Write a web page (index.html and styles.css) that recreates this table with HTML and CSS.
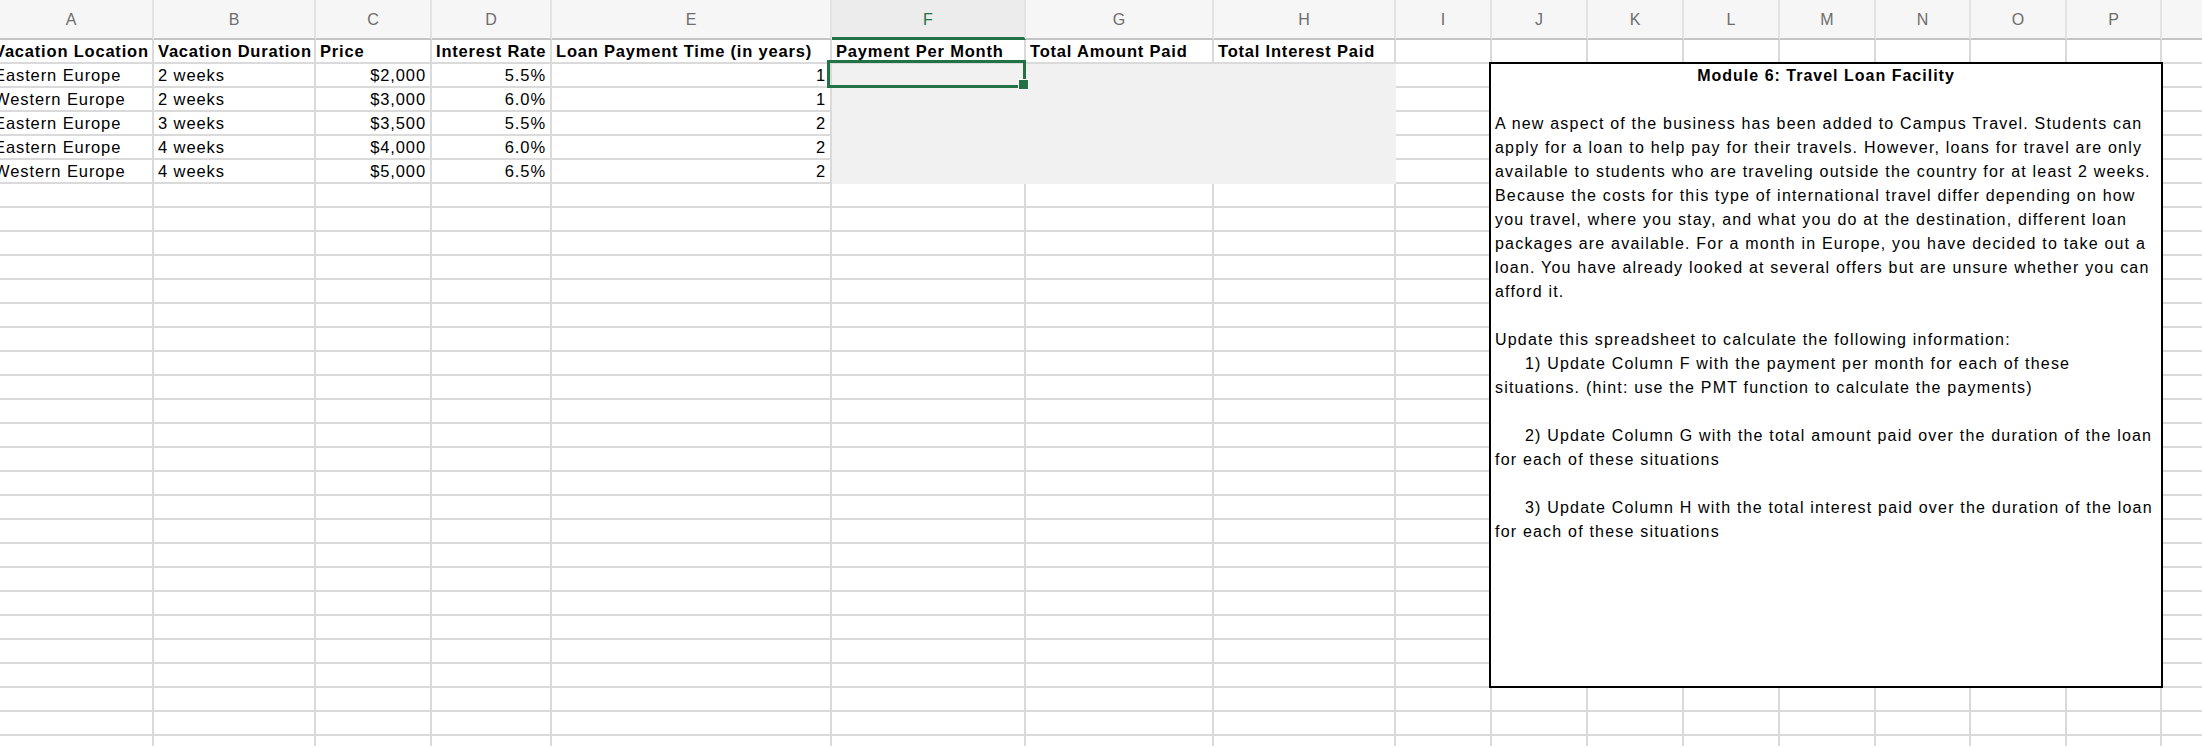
FILE: index.html
```html
<!DOCTYPE html>
<html lang="en">
<head>
<meta charset="utf-8">
<title>Module 6: Travel Loan Facility</title>
<link rel="stylesheet" href="styles.css">
</head>
<body>
<div class="viewport">
  <div class="sheet">
    <div class="ch">A</div><div class="ch">B</div><div class="ch">C</div><div class="ch">D</div><div class="ch">E</div><div class="ch ch-active">F</div><div class="ch">G</div><div class="ch">H</div><div class="ch">I</div><div class="ch">J</div><div class="ch">K</div><div class="ch">L</div><div class="ch">M</div><div class="ch">N</div><div class="ch">O</div><div class="ch">P</div><div class="ch ch-blank"></div>

    <div class="c b">Vacation Location</div><div class="c b">Vacation Duration</div><div class="c b">Price</div><div class="c b">Interest Rate</div><div class="c b">Loan Payment Time (in years)</div><div class="c b">Payment Per Month</div><div class="c b">Total Amount Paid</div><div class="c b">Total Interest Paid</div><div class="c"></div><div class="c"></div><div class="c"></div><div class="c"></div><div class="c"></div><div class="c"></div><div class="c"></div><div class="c"></div><div class="c"></div>

    <div class="c">Eastern Europe</div><div class="c">2 weeks</div><div class="c r">$2,000</div><div class="c r">5.5%</div><div class="c r">1</div><div class="c fill sel"></div><div class="c fill"></div><div class="c fill"></div><div class="c"></div><div class="c"></div><div class="c"></div><div class="c"></div><div class="c"></div><div class="c"></div><div class="c"></div><div class="c"></div><div class="c"></div>

    <div class="c">Western Europe</div><div class="c">2 weeks</div><div class="c r">$3,000</div><div class="c r">6.0%</div><div class="c r">1</div><div class="c fill"></div><div class="c fill"></div><div class="c fill"></div><div class="c"></div><div class="c"></div><div class="c"></div><div class="c"></div><div class="c"></div><div class="c"></div><div class="c"></div><div class="c"></div><div class="c"></div>

    <div class="c">Eastern Europe</div><div class="c">3 weeks</div><div class="c r">$3,500</div><div class="c r">5.5%</div><div class="c r">2</div><div class="c fill"></div><div class="c fill"></div><div class="c fill"></div><div class="c"></div><div class="c"></div><div class="c"></div><div class="c"></div><div class="c"></div><div class="c"></div><div class="c"></div><div class="c"></div><div class="c"></div>

    <div class="c">Eastern Europe</div><div class="c">4 weeks</div><div class="c r">$4,000</div><div class="c r">6.0%</div><div class="c r">2</div><div class="c fill"></div><div class="c fill"></div><div class="c fill"></div><div class="c"></div><div class="c"></div><div class="c"></div><div class="c"></div><div class="c"></div><div class="c"></div><div class="c"></div><div class="c"></div><div class="c"></div>

    <div class="c">Western Europe</div><div class="c">4 weeks</div><div class="c r">$5,000</div><div class="c r">6.5%</div><div class="c r">2</div><div class="c fill"></div><div class="c fill"></div><div class="c fill"></div><div class="c"></div><div class="c"></div><div class="c"></div><div class="c"></div><div class="c"></div><div class="c"></div><div class="c"></div><div class="c"></div><div class="c"></div>

    <div class="tail"></div><div class="tail"></div><div class="tail"></div><div class="tail"></div><div class="tail"></div><div class="tail"></div><div class="tail"></div><div class="tail"></div><div class="tail"></div><div class="tail"></div><div class="tail"></div><div class="tail"></div><div class="tail"></div><div class="tail"></div><div class="tail"></div><div class="tail"></div><div class="tail"></div>

    <div class="note">
      <div class="note-title">Module 6: Travel Loan Facility</div>
      <p class="note-p">A new aspect of the business has been added to Campus Travel. Students can<br>apply for a loan to help pay for their travels. However, loans for travel are only<br>available to students who are traveling outside the country for at least 2 weeks.<br>Because the costs for this type of international travel differ depending on how<br>you travel, where you stay, and what you do at the destination, different loan<br>packages are available. For a month in Europe, you have decided to take out a<br>loan. You have already looked at several offers but are unsure whether you can<br>afford it.</p>
      <p class="note-p tight">Update this spreadsheet to calculate the following information:</p>
      <p class="note-p ind">1) Update Column F with the payment per month for each of these<br>situations. (hint: use the PMT function to calculate the payments)</p>
      <p class="note-p ind">2) Update Column G with the total amount paid over the duration of the loan<br>for each of these situations</p>
      <p class="note-p ind">3) Update Column H with the total interest paid over the duration of the loan<br>for each of these situations</p>
    </div>
  </div>
</div>
</body>
</html>
```

FILE: styles.css
```css
html, body {
  margin: 0;
  padding: 0;
  background: #ffffff;
  overflow: hidden;
}

body {
  font-family: "Liberation Sans", Arial, Helvetica, sans-serif;
  color: #000000;
}

.viewport {
  width: 2202px;
  height: 746px;
  overflow: hidden;
}

.sheet {
  position: relative;
  margin-left: -10px;
  display: grid;
  grid-template-columns: 164px 162px 116px 120px 280px 194px 188px 182px 96px 96px 96px 96px 96px 95px 96px 95px 200px;
  grid-template-rows: 40px repeat(30, 24px);
}

.ch {
  box-sizing: border-box;
  height: 40px;
  padding-top: 2px;
  background: #f6f6f6;
  border-right: 2px solid #e3e3e3;
  border-bottom: 2px solid #c4c4c4;
  color: #6d6d6d;
  font-size: 16px;
  line-height: 36px;
  text-align: center;
}

.ch-active {
  background: #ececec;
  color: #217346;
  border-bottom: 3px solid #217346;
  line-height: 35px;
}

.c {
  box-sizing: border-box;
  height: 24px;
  padding: 1px 4px 0;
  border-right: 2px solid #dadada;
  border-bottom: 2px solid #dadada;
  font-size: 16.5px;
  line-height: 21px;
  letter-spacing: 0.9px;
  white-space: nowrap;
}

.b {
  font-weight: bold;
  letter-spacing: 0.8px;
}

.r {
  text-align: right;
}

.fill {
  background: #f1f1f1;
  border-color: #f1f1f1;
}

.sel {
  position: relative;
  z-index: 2;
}

.sel::before {
  content: "";
  position: absolute;
  top: -4px;
  left: -5px;
  right: -2px;
  bottom: -2px;
  border: 3px solid #217346;
}

.sel::after {
  content: "";
  position: absolute;
  right: -5px;
  bottom: -4px;
  width: 9px;
  height: 9px;
  background: #217346;
  border: 1px solid #ffffff;
}

.tail {
  grid-row: span 24;
  border-right: 2px solid #dadada;
  background: repeating-linear-gradient(to bottom, #ffffff 0, #ffffff 22px, #dadada 22px, #dadada 24px);
}

.note {
  position: absolute;
  left: 1499px;
  top: 62px;
  width: 674px;
  height: 626px;
  box-sizing: border-box;
  border: 2px solid #000000;
  background: #ffffff;
  padding: 0 4px;
  font-size: 16px;
  line-height: 24px;
  letter-spacing: 1.2px;
  white-space: nowrap;
  z-index: 3;
}

.note-title {
  font-weight: bold;
  letter-spacing: 1px;
  text-align: center;
  margin-bottom: 24px;
}

.note-p {
  margin: 0 0 24px;
}

.note-p.tight {
  margin-bottom: 0;
}

.note-p.ind {
  text-indent: 30px;
}
```
